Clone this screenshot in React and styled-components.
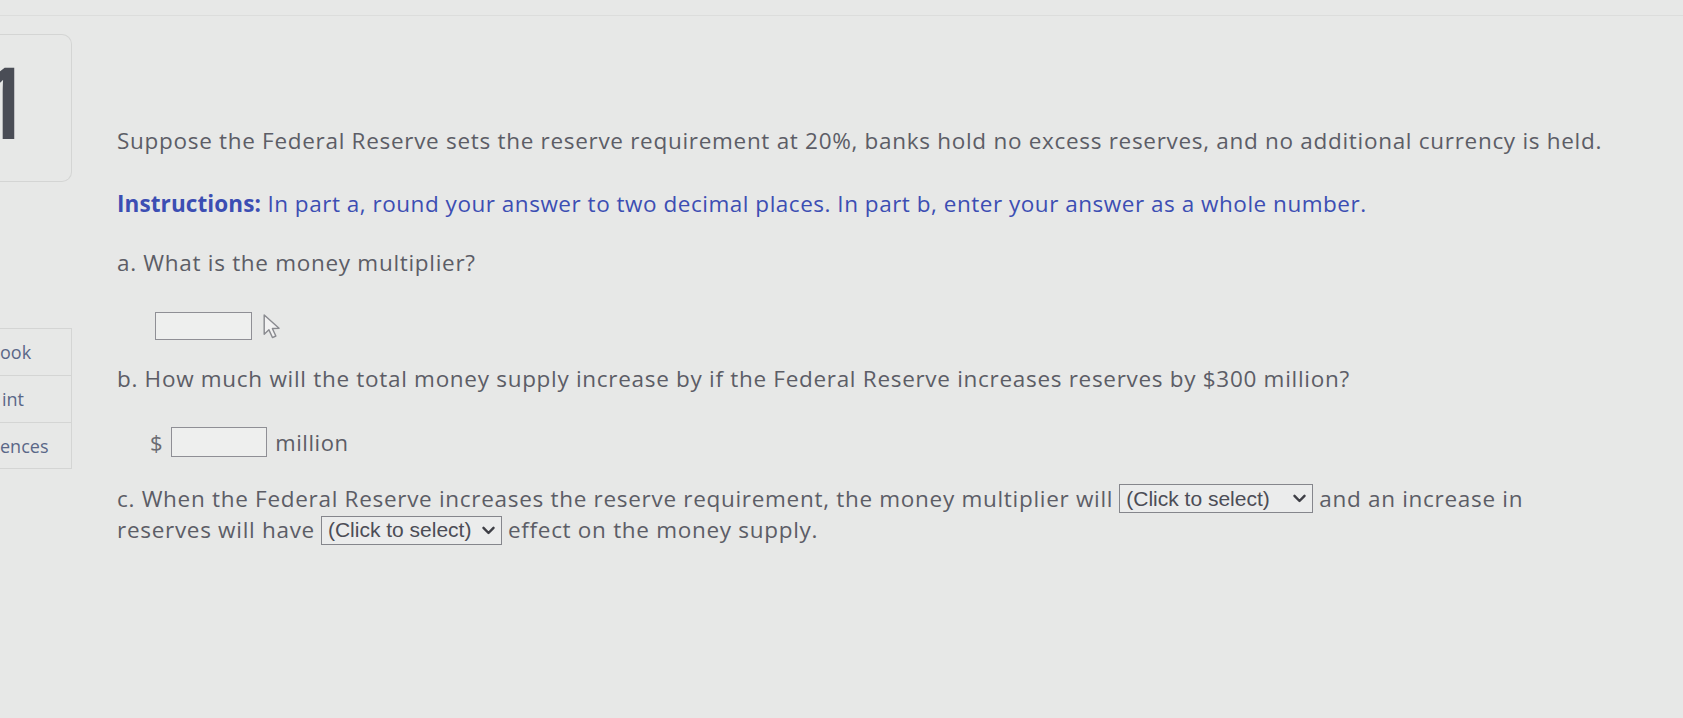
import React from 'react';
import styled, { createGlobalStyle } from 'styled-components';

const GlobalStyle = createGlobalStyle`
	html, body {
		margin: 0;
		padding: 0;
		background: #e7e8e7;
	}
	body {
		font-family: 'Open Sans', 'Lato', sans-serif;
		color: #5c5d66;
	}
`;

const Page = styled.div`
	display: flex;
	width: 1683px;
	height: 703px;
	overflow: hidden;
	background: #e7e8e7;
	border-top: 1px solid #dcdddc;
	box-sizing: border-box;
	margin-top: 15px;
`;

const Sidebar = styled.div`
	width: 72px;
	flex-shrink: 0;
	display: flex;
	flex-direction: column;
	padding-top: 18px;
`;

const NumberCard = styled.div`
	height: 146px;
	border: 1px solid #d4d5d4;
	border-left: none;
	border-radius: 0 10px 10px 0;
	overflow: hidden;
	display: flex;
	align-items: flex-start;
`;

const BigNumber = styled.span`
	font-family: 'Open Sans', sans-serif;
	font-weight: 600;
	font-size: 100px;
	line-height: 1;
	color: #4a4d56;
	margin-left: -24px;
	margin-top: 15px;
`;

const NavCard = styled.div`
	margin-top: 146px;
	border: 1px solid #d4d5d4;
	border-left: none;
	display: flex;
	flex-direction: column;
`;

const NavItem = styled.div`
	height: ${(p) => p.h}px;
	display: flex;
	align-items: center;
	font-family: 'Open Sans', sans-serif;
	font-size: 18px;
	color: #5a6787;
	padding-left: ${(p) => p.pad}px;
	border-top: ${(p) => (p.first ? 'none' : '1px solid #d4d5d4')};
	white-space: nowrap;
	overflow: hidden;
`;

const Main = styled.div`
	flex: 1;
	padding-left: 45px;
	padding-top: 110px;
	display: flex;
	flex-direction: column;
	align-items: flex-start;
`;

const Para = styled.div`
	font-size: 22.5px;
	letter-spacing: 0.7px;
	line-height: 30px;
	color: #5c5d66;
	margin-bottom: ${(p) => p.mb || 0}px;
	white-space: nowrap;
`;

const Instructions = styled(Para)`
	color: #3c4eb3;
	letter-spacing: 0.52px;
	b {
		font-weight: 700;
		letter-spacing: 0.1px;
	}
`;

const AnswerRow = styled.div`
	display: flex;
	align-items: center;
	height: ${(p) => p.h}px;
	gap: ${(p) => p.gap || 8}px;
	margin-left: ${(p) => p.indent}px;
	margin-bottom: ${(p) => p.mb}px;
	font-size: 22px;
	letter-spacing: 0.6px;
	color: #5c5d66;
`;

const Field = styled.div`
	width: ${(p) => p.w}px;
	height: ${(p) => p.h}px;
	border: 1.5px solid #8f8f95;
	background: #eeefee;
	box-sizing: border-box;
`;

const Dollar = styled.span`
	font-size: 22px;
	color: #6a6b72;
`;

const Select = styled.span`
	display: inline-flex;
	align-items: center;
	justify-content: space-between;
	width: ${(p) => p.w}px;
	height: 29px;
	box-sizing: border-box;
	border: 1.5px solid #85868c;
	background: #ebecec;
	padding: 0 6px 0 6px;
	vertical-align: middle;
	margin: 0 6px 0 6px;
	font-family: 'Liberation Sans', Arial, sans-serif;
	font-size: 21px;
	letter-spacing: 0;
	color: #4c4d56;
	position: relative;
	top: -2px;
`;

const Chevron = () => (
	<svg width="13" height="9" viewBox="0 0 13 9">
		<path d="M1.5 1.8 L6.5 7 L11.5 1.8" fill="none" stroke="#3e3f46" strokeWidth="2.4" strokeLinecap="round" strokeLinejoin="round" />
	</svg>
);

const Pointer = () => (
	<svg width="22" height="28" viewBox="0 -1 20 25">
		<path d="M2 1.5 L2 19 L6.3 15 L9.5 22 L12.6 20.6 L9.4 13.8 L15.5 13.6 Z" fill="#f2f2f2" stroke="#8a8b90" strokeWidth="1.3" strokeLinejoin="round" />
	</svg>
);

const App = () => {
	return (
		<>
			<GlobalStyle />
			<Page>
				<Sidebar>
					<NumberCard>
						<BigNumber>1</BigNumber>
					</NumberCard>
					<NavCard>
						<NavItem first h={46} pad={0}>ook</NavItem>
						<NavItem h={46} pad={2}>int</NavItem>
						<NavItem h={45} pad={0}>ences</NavItem>
					</NavCard>
				</Sidebar>
				<Main>
					<Para mb={33}>
						Suppose the Federal Reserve sets the reserve requirement at 20%, banks hold no excess reserves, and no additional currency is held.
					</Para>
					<Instructions mb={29}>
						<b>Instructions:</b> In part a, round your answer to two decimal places. In part b, enter your answer as a whole number.
					</Instructions>
					<Para mb={34}>a. What is the money multiplier?</Para>
					<AnswerRow h={28} indent={38} mb={24} gap={10}>
						<Field w={97} h={28} />
						<Pointer />
					</AnswerRow>
					<Para mb={33}>
						b. How much will the total money supply increase by if the Federal Reserve increases reserves by $300 million?
					</Para>
					<AnswerRow h={30} indent={33} mb={27} gap={8}>
						<Dollar>$</Dollar>
						<Field w={96} h={30} />
						<span>million</span>
					</AnswerRow>
					<Para>
						c. When the Federal Reserve increases the reserve requirement, the money multiplier will
						<Select w={194}>
							(Click to select)
							<Chevron />
						</Select>
						and an increase in
					</Para>
					<Para>
						reserves will have
						<Select w={181}>
							(Click to select)
							<Chevron />
						</Select>
						effect on the money supply.
					</Para>
				</Main>
			</Page>
		</>
	);
};

export default App;
